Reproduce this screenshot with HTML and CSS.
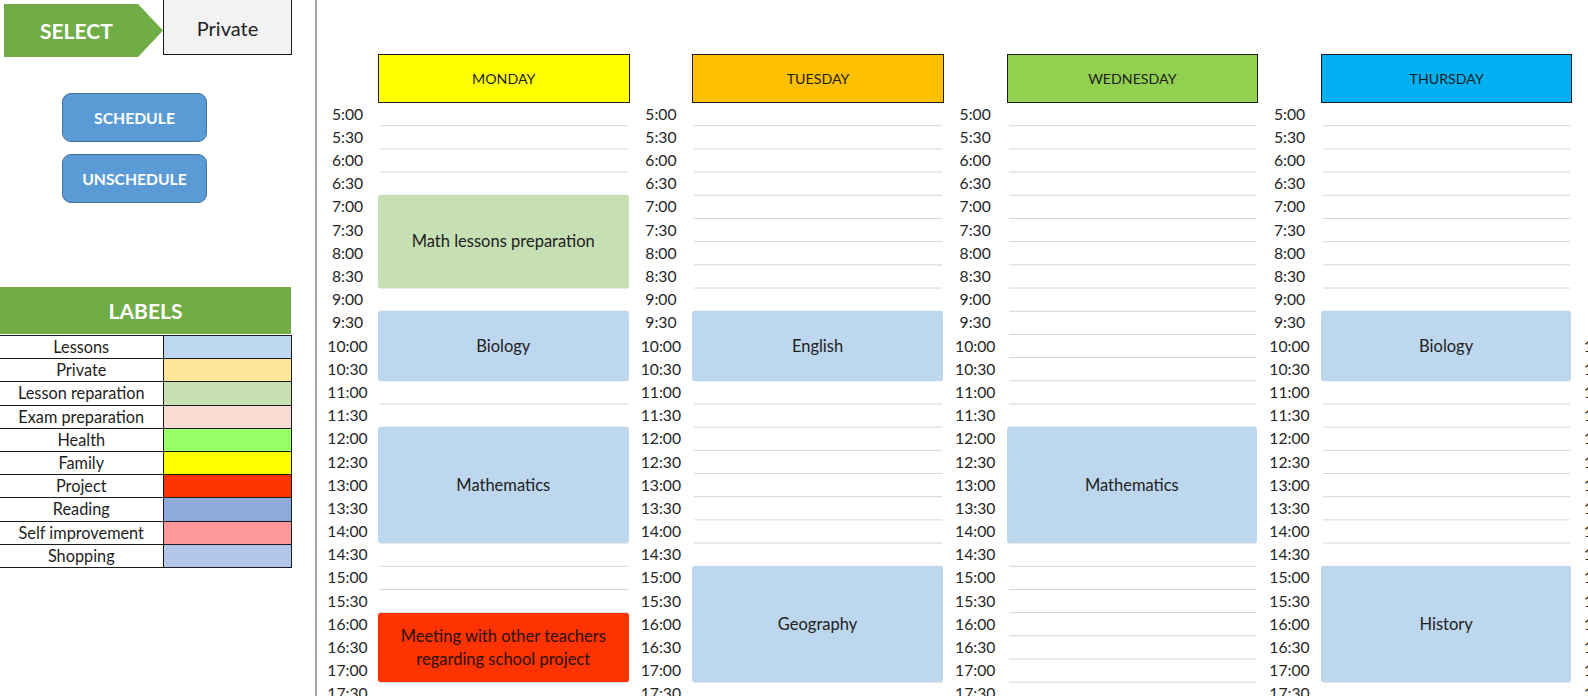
FILE: index.html
```html
<!DOCTYPE html>
<html lang="en">
<head>
<meta charset="utf-8">
<title>Weekly Schedule</title>
<link rel="stylesheet" href="styles.css">
</head>
<body>
<div class="app">
  <aside class="panel">
    <div class="select-row">
      <div class="select-tag">SELECT</div>
      <div class="select-value">Private</div>
    </div>
    <div class="buttons">
      <button class="btn">SCHEDULE</button>
      <button class="btn">UNSCHEDULE</button>
    </div>
    <div class="labels">
      <div class="labels-title">LABELS</div>
      <table class="labels-table">
        <tr><td class="lbl">Lessons</td><td class="sw c-lessons"></td></tr>
        <tr><td class="lbl">Private</td><td class="sw c-private"></td></tr>
        <tr><td class="lbl">Lesson reparation</td><td class="sw c-prep"></td></tr>
        <tr><td class="lbl">Exam preparation</td><td class="sw c-exam"></td></tr>
        <tr><td class="lbl">Health</td><td class="sw c-health"></td></tr>
        <tr><td class="lbl">Family</td><td class="sw c-family"></td></tr>
        <tr><td class="lbl">Project</td><td class="sw c-project"></td></tr>
        <tr><td class="lbl">Reading</td><td class="sw c-reading"></td></tr>
        <tr><td class="lbl">Self improvement</td><td class="sw c-self"></td></tr>
        <tr><td class="lbl">Shopping</td><td class="sw c-shopping"></td></tr>
      </table>
    </div>
  </aside>

  <main class="week">
    <section class="group">
      <div class="times">
        <div class="time">5:00</div><div class="time">5:30</div><div class="time">6:00</div><div class="time">6:30</div>
        <div class="time">7:00</div><div class="time">7:30</div><div class="time">8:00</div><div class="time">8:30</div>
        <div class="time">9:00</div><div class="time">9:30</div><div class="time">10:00</div><div class="time">10:30</div>
        <div class="time">11:00</div><div class="time">11:30</div><div class="time">12:00</div><div class="time">12:30</div>
        <div class="time">13:00</div><div class="time">13:30</div><div class="time">14:00</div><div class="time">14:30</div>
        <div class="time">15:00</div><div class="time">15:30</div><div class="time">16:00</div><div class="time">16:30</div>
        <div class="time">17:00</div><div class="time">17:30</div>
      </div>
      <div class="day">
        <div class="day-head h-monday">MONDAY</div>
        <div class="slots">
          <div class="event c-prep" style="grid-row: 5 / span 4">Math lessons preparation</div>
          <div class="event c-lessons" style="grid-row: 10 / span 3">Biology</div>
          <div class="event c-lessons" style="grid-row: 15 / span 5">Mathematics</div>
          <div class="event c-project" style="grid-row: 23 / span 3">Meeting with other teachers<br>regarding school project</div>
        </div>
      </div>
    </section>

    <section class="group">
      <div class="times">
        <div class="time">5:00</div><div class="time">5:30</div><div class="time">6:00</div><div class="time">6:30</div>
        <div class="time">7:00</div><div class="time">7:30</div><div class="time">8:00</div><div class="time">8:30</div>
        <div class="time">9:00</div><div class="time">9:30</div><div class="time">10:00</div><div class="time">10:30</div>
        <div class="time">11:00</div><div class="time">11:30</div><div class="time">12:00</div><div class="time">12:30</div>
        <div class="time">13:00</div><div class="time">13:30</div><div class="time">14:00</div><div class="time">14:30</div>
        <div class="time">15:00</div><div class="time">15:30</div><div class="time">16:00</div><div class="time">16:30</div>
        <div class="time">17:00</div><div class="time">17:30</div>
      </div>
      <div class="day">
        <div class="day-head h-tuesday">TUESDAY</div>
        <div class="slots">
          <div class="event c-lessons" style="grid-row: 10 / span 3">English</div>
          <div class="event c-lessons" style="grid-row: 21 / span 5">Geography</div>
        </div>
      </div>
    </section>

    <section class="group">
      <div class="times">
        <div class="time">5:00</div><div class="time">5:30</div><div class="time">6:00</div><div class="time">6:30</div>
        <div class="time">7:00</div><div class="time">7:30</div><div class="time">8:00</div><div class="time">8:30</div>
        <div class="time">9:00</div><div class="time">9:30</div><div class="time">10:00</div><div class="time">10:30</div>
        <div class="time">11:00</div><div class="time">11:30</div><div class="time">12:00</div><div class="time">12:30</div>
        <div class="time">13:00</div><div class="time">13:30</div><div class="time">14:00</div><div class="time">14:30</div>
        <div class="time">15:00</div><div class="time">15:30</div><div class="time">16:00</div><div class="time">16:30</div>
        <div class="time">17:00</div><div class="time">17:30</div>
      </div>
      <div class="day">
        <div class="day-head h-wednesday">WEDNESDAY</div>
        <div class="slots">
          <div class="event c-lessons" style="grid-row: 15 / span 5">Mathematics</div>
        </div>
      </div>
    </section>

    <section class="group">
      <div class="times">
        <div class="time">5:00</div><div class="time">5:30</div><div class="time">6:00</div><div class="time">6:30</div>
        <div class="time">7:00</div><div class="time">7:30</div><div class="time">8:00</div><div class="time">8:30</div>
        <div class="time">9:00</div><div class="time">9:30</div><div class="time">10:00</div><div class="time">10:30</div>
        <div class="time">11:00</div><div class="time">11:30</div><div class="time">12:00</div><div class="time">12:30</div>
        <div class="time">13:00</div><div class="time">13:30</div><div class="time">14:00</div><div class="time">14:30</div>
        <div class="time">15:00</div><div class="time">15:30</div><div class="time">16:00</div><div class="time">16:30</div>
        <div class="time">17:00</div><div class="time">17:30</div>
      </div>
      <div class="day">
        <div class="day-head h-thursday">THURSDAY</div>
        <div class="slots">
          <div class="event c-lessons" style="grid-row: 10 / span 3">Biology</div>
          <div class="event c-lessons" style="grid-row: 21 / span 5">History</div>
        </div>
      </div>
    </section>

    <section class="group">
      <div class="times">
        <div class="time">5:00</div><div class="time">5:30</div><div class="time">6:00</div><div class="time">6:30</div>
        <div class="time">7:00</div><div class="time">7:30</div><div class="time">8:00</div><div class="time">8:30</div>
        <div class="time">9:00</div><div class="time">9:30</div><div class="time">10:00</div><div class="time">10:30</div>
        <div class="time">11:00</div><div class="time">11:30</div><div class="time">12:00</div><div class="time">12:30</div>
        <div class="time">13:00</div><div class="time">13:30</div><div class="time">14:00</div><div class="time">14:30</div>
        <div class="time">15:00</div><div class="time">15:30</div><div class="time">16:00</div><div class="time">16:30</div>
        <div class="time">17:00</div><div class="time">17:30</div>
      </div>
      <div class="day">
        <div class="day-head h-friday">FRIDAY</div>
        <div class="slots"></div>
      </div>
    </section>
  </main>
</div>
</body>
</html>
```
FILE: styles.css
```css
html, body {
  margin: 0;
  padding: 0;
  width: 1588px;
  height: 696px;
  overflow: hidden;
  background: #ffffff;
}

body {
  font-family: Lato, "Liberation Sans", sans-serif;
  color: #222222;
}

.app {
  display: flex;
  align-items: flex-start;
  height: 696px;
  overflow: hidden;
}

/* ---------- left panel ---------- */
.panel {
  flex: none;
  width: 315px;
  height: 696px;
  border-right: 2px solid #a6a6a6;
}

.select-row {
  display: flex;
  align-items: flex-start;
  height: 57px;
}

.select-tag {
  flex: none;
  box-sizing: border-box;
  margin: 4px 0 0 4px;
  width: 159px;
  height: 53px;
  padding-left: 36px;
  display: flex;
  align-items: center;
  background: #70ad47;
  clip-path: polygon(0 0, 84.3% 0, 100% 50%, 84.3% 100%, 0 100%);
  color: #ffffff;
  font-weight: 700;
  font-size: 21px;
}

.select-value {
  flex: none;
  box-sizing: border-box;
  width: 129px;
  height: 55px;
  padding-top: 2px;
  display: flex;
  align-items: center;
  justify-content: center;
  background: #f2f2f2;
  border: 1.5px solid #1c1c1c;
  border-top: none;
  font-size: 20px;
  color: #222222;
}

.buttons {
  display: flex;
  flex-direction: column;
  gap: 12px;
  margin-top: 36px;
  padding-left: 62px;
}

.btn {
  box-sizing: border-box;
  width: 145px;
  height: 49px;
  background: #5b9bd5;
  border: 1px solid #41719c;
  border-radius: 9px;
  color: #ffffff;
  font-family: Lato, "Liberation Sans", sans-serif;
  font-weight: 700;
  font-size: 15.7px;
  padding: 0;
}

.labels {
  margin-top: 84px;
}

.labels-title {
  width: 291px;
  height: 47px;
  display: flex;
  align-items: center;
  justify-content: center;
  background: #70ad47;
  color: #ffffff;
  font-weight: 700;
  font-size: 21px;
}

.labels-table {
  margin-top: 1px;
  width: 292px;
  border-collapse: collapse;
  table-layout: fixed;
}

.labels-table td {
  height: 23.2px;
  padding: 0;
  border: 1px solid #1c1c1c;
  box-sizing: border-box;
  line-height: 20px;
  font-size: 16.3px;
  color: #1e1e1e;
}

.labels-table .lbl {
  width: 163px;
  text-align: center;
  border-left: none;
}

/* ---------- colours ---------- */
.c-lessons  { background: #bdd7ee; }
.c-private  { background: #ffe699; }
.c-prep     { background: #c6e0b4; }
.c-exam     { background: #f9ddd2; }
.c-health   { background: #99ff66; }
.c-family   { background: #ffff00; }
.c-project  { background: #ff3300; }
.c-reading  { background: #8eaadb; }
.c-self     { background: #ff9999; }
.c-shopping { background: #b4c6e7; }

/* ---------- week grid ---------- */
.week {
  flex: 1;
  display: flex;
  align-items: flex-start;
  overflow: hidden;
  min-width: 0;
  height: 696px;
}

.group {
  flex: none;
  display: flex;
  align-items: flex-start;
}

.times {
  flex: none;
  width: 62.8px;
  padding-top: 102.7px;
}

.group:first-child .times {
  width: 61px;
}

.time {
  height: 23.2px;
  line-height: 23.2px;
  text-align: center;
  font-size: 15.7px;
  color: #262626;
}

.day {
  flex: none;
  width: 251.5px;
  display: flex;
  flex-direction: column;
}

.day-head {
  flex: none;
  box-sizing: border-box;
  margin-top: 54px;
  height: 48.7px;
  display: flex;
  align-items: center;
  justify-content: center;
  border: 1.5px solid #1e1e1e;
  font-size: 14.2px;
  color: #1e1e1e;
}

.h-monday    { background: #ffff00; }
.h-tuesday   { background: #ffc000; }
.h-wednesday { background: #92d050; }
.h-thursday  { background: #00b0f0; }
.h-friday    { background: #ff99cc; }

.slots {
  flex: none;
  display: grid;
  grid-template-columns: 1fr;
  grid-template-rows: repeat(26, 23.2px);
  background-image: linear-gradient(to bottom, transparent 22.2px, #d4d4d4 22.2px, #d4d4d4 23.2px);
  background-size: calc(100% - 4px) 23.2px;
  background-position: 2px 0;
  background-repeat: repeat-y;
}

.event {
  grid-column: 1;
  margin-right: 1px;
  border-radius: 2px;
  display: flex;
  align-items: center;
  justify-content: center;
  text-align: center;
  font-size: 16.5px;
  line-height: 23px;
  color: #222222;
}

.event.c-project {
  color: #2a1206;
}
```
